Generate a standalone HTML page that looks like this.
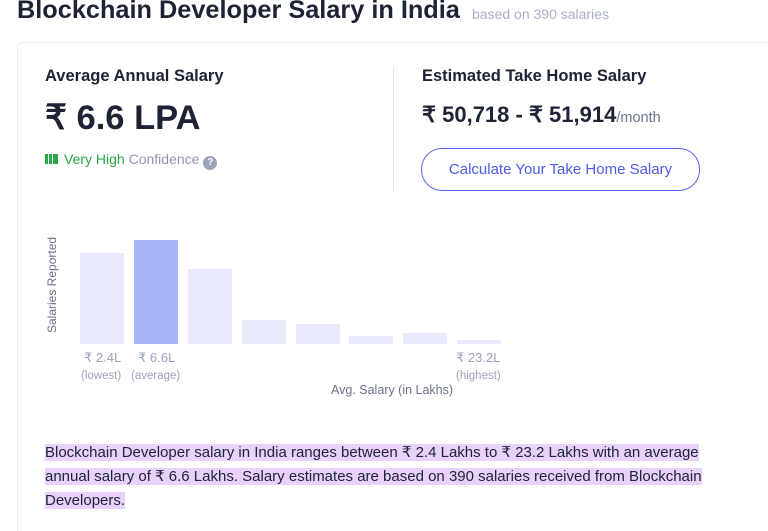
<!DOCTYPE html>
<html><head><meta charset="utf-8"><style>
html,body{margin:0;width:768px;height:531px;overflow:hidden}
body{background:#fff;font-family:"Liberation Sans",sans-serif;position:relative;color:#1d2235}
.a{position:absolute;white-space:nowrap}
.bar{position:absolute;width:44px;background:#e9ebfd;top:344px;transform:translateY(-100%)}
.hl{background:#e8d2fb}
</style></head><body>
<div class="a" style="left:17px;top:-4px;font-size:25.3px;font-weight:bold;color:#1d2235">Blockchain Developer Salary in India</div>
<div class="a" style="left:472px;top:6px;font-size:14px;color:#a8aec6">based on 390 salaries</div>
<div class="a" style="left:17px;top:42px;width:760px;height:488px;border:1px solid #eceef5;border-bottom:none;border-right:none;border-radius:6px 0 0 0"></div>
<div class="a" style="left:45px;top:67px;font-size:16.5px;font-weight:bold">Average Annual Salary</div>
<div class="a" style="left:45px;top:98px;font-size:34.5px;font-weight:bold">₹ 6.6 LPA</div>
<div class="a" style="left:45px;top:151px;font-size:14px"><span style="display:inline-block;width:13px;height:10px;background:linear-gradient(90deg,#28a745 3px,transparent 3px,transparent 4px,#28a745 4px,#28a745 7px,transparent 7px,transparent 8px,#28a745 8px);margin-right:6px"></span><span style="color:#28a745">Very High</span> <span style="color:#8f95ac">Confidence</span> <span style="display:inline-block;width:14px;height:14px;border-radius:50%;background:#9ca2ba;color:#fff;font-size:10px;text-align:center;line-height:14px;font-weight:bold;vertical-align:-1px">?</span></div>
<div class="a" style="left:393px;top:66px;width:1px;height:125px;background:#e5e7ef"></div>
<div class="a" style="left:422px;top:67px;font-size:16.5px;font-weight:bold">Estimated Take Home Salary</div>
<div class="a" style="left:422px;top:102px;font-size:22px;font-weight:bold">₹ 50,718 - ₹ 51,914<span style="font-size:14.5px;font-weight:normal;color:#6b7088">/month</span></div>
<div class="a" style="left:421px;top:148px;width:277px;height:41px;border:1px solid #5a63f0;border-radius:21px;color:#4f5ae8;font-size:15px;text-align:center;line-height:41px">Calculate Your Take Home Salary</div>
<div class="a" style="left:45px;top:333px;font-size:12px;color:#6b7088;transform:rotate(-90deg);transform-origin:0 0">Salaries Reported</div>
<div class="bar" style="left:80px;height:91px"></div>
<div class="bar" style="left:134px;height:104px;background:#a9b5fb"></div>
<div class="bar" style="left:188px;height:75px"></div>
<div class="bar" style="left:242px;height:24px"></div>
<div class="bar" style="left:296px;height:20px"></div>
<div class="bar" style="left:349px;height:8px"></div>
<div class="bar" style="left:403px;height:11px"></div>
<div class="bar" style="left:457px;height:4px"></div>
<div class="a" style="left:84px;top:350px;font-size:13px;color:#9ca2ba">₹ 2.4L</div>
<div class="a" style="left:138px;top:350px;font-size:13px;color:#9ca2ba">₹ 6.6L</div>
<div class="a" style="left:456px;top:350px;font-size:13px;color:#9ca2ba">₹ 23.2L</div>
<div class="a" style="left:81px;top:370px;font-size:11.5px;color:#9ca2ba">(lowest)</div>
<div class="a" style="left:131px;top:370px;font-size:11.5px;color:#9ca2ba">(average)</div>
<div class="a" style="left:456px;top:370px;font-size:11.5px;color:#9ca2ba">(highest)</div>
<div class="a" style="left:331px;top:383px;font-size:12.5px;color:#6b7088">Avg. Salary (in Lakhs)</div>
<div class="a" style="left:45px;top:441px;font-size:15px;line-height:24px;white-space:normal;width:672px;color:#1d2235"><span class="hl">Blockchain Developer salary in India ranges between ₹ 2.4 Lakhs to ₹ 23.2 Lakhs with an average annual salary of ₹ 6.6 Lakhs. Salary estimates are based on 390 salaries received from Blockchain Developers.</span></div>
</body></html>
